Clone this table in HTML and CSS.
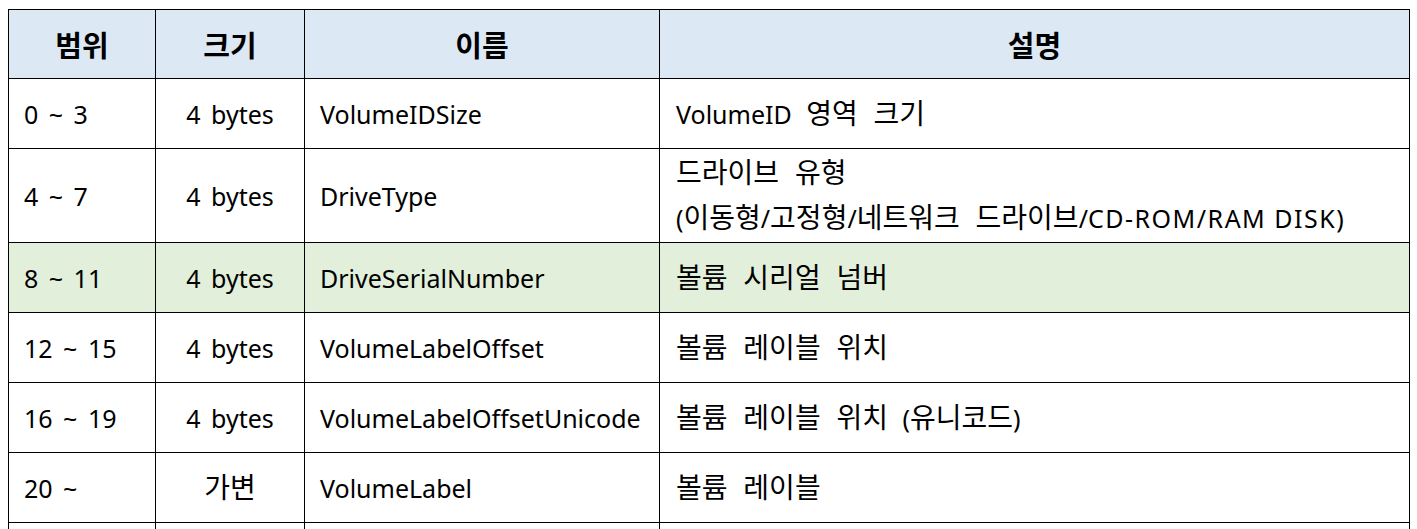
FILE: index.html
```html
<!DOCTYPE html>
<html lang="ko">
<head>
<meta charset="utf-8">
<title>Volume ID 구조</title>
<link rel="stylesheet" href="styles.css">
</head>
<body>
<table class="spec">
  <colgroup>
    <col class="c-range">
    <col class="c-size">
    <col class="c-name">
    <col class="c-desc">
  </colgroup>
  <thead>
    <tr class="head">
      <th>범위</th>
      <th>크기</th>
      <th>이름</th>
      <th>설명</th>
    </tr>
  </thead>
  <tbody>
    <tr class="row">
      <td>0 ~ 3</td>
      <td class="center">4 bytes</td>
      <td>VolumeIDSize</td>
      <td class="desc">VolumeID <span class="ko">영역 크기</span></td>
    </tr>
    <tr class="row tall">
      <td>4 ~ 7</td>
      <td class="center">4 bytes</td>
      <td>DriveType</td>
      <td class="desc multi"><span class="ko">드라이브 유형</span><br>(<span class="ko">이동형</span>/<span class="ko">고정형</span>/<span class="ko">네트워크 드라이브</span>/<span class="wide">CD-ROM/RAM DISK</span>)</td>
    </tr>
    <tr class="row hl">
      <td>8 ~ 11</td>
      <td class="center">4 bytes</td>
      <td>DriveSerialNumber</td>
      <td class="desc"><span class="ko">볼륨 시리얼 넘버</span></td>
    </tr>
    <tr class="row">
      <td>12 ~ 15</td>
      <td class="center">4 bytes</td>
      <td>VolumeLabelOffset</td>
      <td class="desc"><span class="ko">볼륨 레이블 위치</span></td>
    </tr>
    <tr class="row">
      <td>16 ~ 19</td>
      <td class="center">4 bytes</td>
      <td>VolumeLabelOffsetUnicode</td>
      <td class="desc"><span class="ko">볼륨 레이블 위치</span> (<span class="ko">유니코드</span>)</td>
    </tr>
    <tr class="row">
      <td>20 ~</td>
      <td class="center"><span class="ko">가변</span></td>
      <td>VolumeLabel</td>
      <td class="desc"><span class="ko">볼륨 레이블</span></td>
    </tr>
    <tr class="row">
      <td></td>
      <td class="center"></td>
      <td></td>
      <td class="desc"></td>
    </tr>
  </tbody>
</table>
</body>
</html>
```

FILE: styles.css
```css
html, body {
  margin: 0;
  padding: 0;
  background: #ffffff;
}

body {
  padding: 9px 0 0 8px;
  font-family: "Noto Sans", "Noto Sans CJK KR", sans-serif;
  font-size: 25px;
  color: #000000;
}

.spec {
  border-collapse: collapse;
  table-layout: fixed;
  width: 1401px;
}

.c-range { width: 147px; }
.c-size { width: 149px; }
.c-name { width: 355px; }
.c-desc { width: 750px; }

.spec th,
.spec td {
  border: 1px solid #000000;
  padding: 0 0 0 15px;
  vertical-align: middle;
  text-align: left;
  white-space: nowrap;
  overflow: hidden;
  word-spacing: 4px;
}

.spec th {
  font-family: "Noto Sans CJK KR", sans-serif;
  font-size: 29px;
  font-weight: 700;
  text-align: center;
  padding: 0;
  background: #dde8f5;
}

.head {
  height: 69px;
}

.row {
  height: 70px;
}

.row.tall {
  height: 94px;
}

.row.hl td {
  background: #e2efda;
}

.spec td.center {
  text-align: center;
  padding: 0;
}

.spec td.desc {
  padding-left: 16px;
  word-spacing: 8px;
}

.ko {
  font-family: "Noto Sans CJK KR", sans-serif;
  font-size: 28px;
  word-spacing: 8px;
  line-height: 1;
}

.spec td.center .ko {
  word-spacing: 0;
}

.wide {
  letter-spacing: 1.5px;
  word-spacing: 0;
}

.spec td.multi {
  line-height: 45px;
}
```
